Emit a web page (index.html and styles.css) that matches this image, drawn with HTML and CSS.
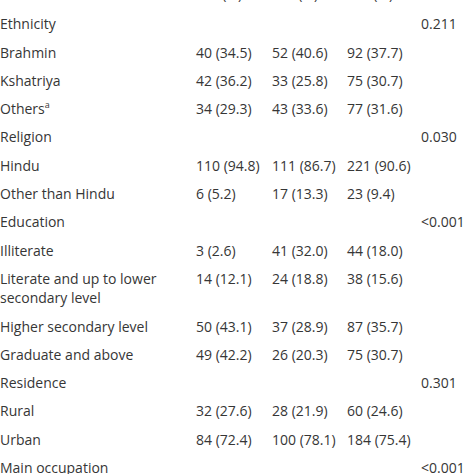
FILE: index.html
```html
<!DOCTYPE html>
<html>
<head>
<meta charset="utf-8">
<link rel="stylesheet" href="styles.css">
</head>
<body>
<table class="tbl">
  <colgroup>
    <col class="c-label"><col class="c-num"><col class="c-num2"><col class="c-num3"><col class="c-p">
  </colgroup>
  <tbody>
    <tr class="head"><td></td><td>No. (%)</td><td>No. (%)</td><td>No. (%)</td><td></td></tr>
    <tr><td>Ethnicity</td><td></td><td></td><td></td><td>0.211</td></tr>
    <tr><td>Brahmin</td><td>40 (34.5)</td><td>52 (40.6)</td><td>92 (37.7)</td><td></td></tr>
    <tr><td>Kshatriya</td><td>42 (36.2)</td><td>33 (25.8)</td><td>75 (30.7)</td><td></td></tr>
    <tr><td>Others<sup class="sup">a</sup></td><td>34 (29.3)</td><td>43 (33.6)</td><td>77 (31.6)</td><td></td></tr>
    <tr><td>Religion</td><td></td><td></td><td></td><td>0.030</td></tr>
    <tr><td>Hindu</td><td>110 (94.8)</td><td>111 (86.7)</td><td>221 (90.6)</td><td></td></tr>
    <tr><td>Other than Hindu</td><td>6 (5.2)</td><td>17 (13.3)</td><td>23 (9.4)</td><td></td></tr>
    <tr><td>Education</td><td></td><td></td><td></td><td>&lt;0.001</td></tr>
    <tr><td>Illiterate</td><td>3 (2.6)</td><td>41 (32.0)</td><td>44 (18.0)</td><td></td></tr>
    <tr><td class="wrap">Literate and up to lower secondary level</td><td>14 (12.1)</td><td>24 (18.8)</td><td>38 (15.6)</td><td></td></tr>
    <tr><td>Higher secondary level</td><td>50 (43.1)</td><td>37 (28.9)</td><td>87 (35.7)</td><td></td></tr>
    <tr><td>Graduate and above</td><td>49 (42.2)</td><td>26 (20.3)</td><td>75 (30.7)</td><td></td></tr>
    <tr><td>Residence</td><td></td><td></td><td></td><td>0.301</td></tr>
    <tr><td>Rural</td><td>32 (27.6)</td><td>28 (21.9)</td><td>60 (24.6)</td><td></td></tr>
    <tr><td>Urban</td><td>84 (72.4)</td><td>100 (78.1)</td><td>184 (75.4)</td><td></td></tr>
    <tr><td>Main occupation</td><td></td><td></td><td></td><td>&lt;0.001</td></tr>
  </tbody>
</table>
</body>
</html>
```

FILE: styles.css
```css
html, body {
  margin: 0;
  padding: 0;
  background: #ffffff;
  overflow: hidden;
}
body {
  font-family: "Open Sans", "DejaVu Sans", sans-serif;
  font-size: 14px;
  color: #363636;
}
.tbl {
  border-collapse: collapse;
  table-layout: fixed;
  width: 474px;
  margin-top: -20px;
}
.c-label { width: 196px; }
.c-num { width: 76px; }
.c-num2 { width: 75px; }
.c-num3 { width: 74px; }
.c-p { width: 53px; }
.tbl td {
  padding: 4.4px 0;
  line-height: 19.5px;
  vertical-align: top;
  white-space: nowrap;
  text-align: left;
}
.tbl .head td {
  padding-bottom: 6px;
}
.tbl td.wrap {
  white-space: normal;
  padding-right: 24px;
}
.sup {
  font-size: 9px;
  line-height: 0;
  vertical-align: 6px;
}
```
